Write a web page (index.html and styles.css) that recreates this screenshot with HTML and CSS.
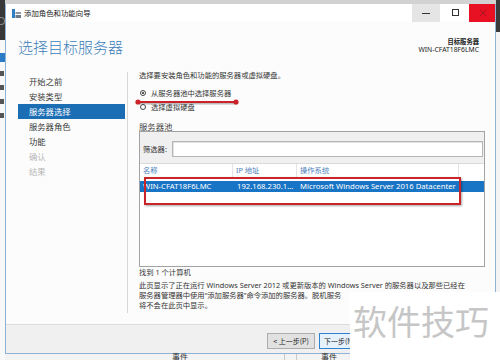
FILE: index.html
```html
<!DOCTYPE html>
<html lang="zh-CN">
<head>
<meta charset="utf-8">
<title>添加角色和功能向导</title>
<link rel="stylesheet" href="styles.css">
</head>
<body>
<div class="screen">
  <div class="side-left">
    <div class="side-dark"><span class="side-round"></span></div>
    <div class="side-icons">
      <span class="sicon sicon-blue"></span>
      <span class="sicon"></span>
      <span class="sicon"></span>
      <span class="sicon"></span>
      <span class="sicon"></span>
    </div>
  </div>

  <div class="middle">
    <div class="top-band"></div>
    <div class="window">
      <div class="titlebar">
        <svg class="app-icon" width="9" height="9" viewBox="0 0 9 9">
          <rect x="0" y="0" width="3" height="9" fill="#2f7fc7"/>
          <rect x="3.5" y="3" width="5.5" height="2" fill="#8c9aa8"/>
          <rect x="3.5" y="6" width="5.5" height="3" fill="#6d7b89"/>
        </svg>
        <span class="title">添加角色和功能向导</span>
        <div class="controls">
          <span class="ctl ctl-min"><svg width="28" height="18" viewBox="0 0 28 18"><line x1="10" y1="9.5" x2="18" y2="9.5" stroke="#333" stroke-width="1"/></svg></span>
          <span class="ctl ctl-max"><svg width="29" height="18" viewBox="0 0 29 18"><rect x="12.5" y="5.5" width="6" height="6" fill="none" stroke="#333" stroke-width="1"/></svg></span>
          <span class="ctl ctl-close"><svg width="26" height="18" viewBox="0 0 26 18"><path d="M11 6 L17 12 M17 6 L11 12" stroke="#a3141c" stroke-width="1"/></svg></span>
        </div>
      </div>

      <div class="header">
        <h1 class="heading">选择目标服务器</h1>
        <div class="target">
          <div class="target-label">目标服务器</div>
          <div class="target-name">WIN-CFAT18F6LMC</div>
        </div>
      </div>

      <div class="body">
        <nav class="nav">
          <div class="nav-item">开始之前</div>
          <div class="nav-item">安装类型</div>
          <div class="nav-item nav-active">服务器选择</div>
          <div class="nav-item">服务器角色</div>
          <div class="nav-item">功能</div>
          <div class="nav-item nav-disabled">确认</div>
          <div class="nav-item nav-disabled">结果</div>
        </nav>

        <div class="content">
          <p class="intro">选择要安装角色和功能的服务器或虚拟硬盘。</p>
          <div class="radio radio-first"><span class="radio-dot radio-checked"></span>从服务器池中选择服务器</div>
          <div class="radio"><span class="radio-dot"></span>选择虚拟硬盘</div>
          <div class="pool-label">服务器池</div>
          <div class="pool">
            <div class="filter">
              <span class="filter-label">筛选器:</span>
              <div class="filter-input"></div>
            </div>
            <div class="grid grid-head">
              <div class="cell">名称</div>
              <div class="cell">IP 地址</div>
              <div class="cell">操作系统</div>
              <div class="cell cell-last"></div>
            </div>
            <div class="grid grid-row">
              <div class="cell">WIN-CFAT18F6LMC</div>
              <div class="cell">192.168.230.1...</div>
              <div class="cell">Microsoft Windows Server 2016 Datacenter</div>
              <div class="cell cell-last"></div>
            </div>
          </div>
          <div class="found">找到 1 个计算机</div>
          <p class="note">此页显示了正在运行 Windows Server 2012 或更新版本的 Windows Server 的服务器以及那些已经在<br>服务器管理器中使用“添加服务器”命令添加的服务器。脱机服务<br>将不会在此页中显示。</p>
        </div>
      </div>

      <div class="footer">
        <button class="btn">&lt; 上一步(P)</button>
        <button class="btn btn-primary">下一步(N)</button>
      </div>
    </div>
    <div class="bottom-strip">
      <span class="bs-text bs-first">事件</span>
      <span class="bs-line bs-line-a"></span>
      <span class="bs-line bs-line-b"></span>
      <span class="bs-text bs-second">事件</span>
    </div>
  </div>

  <div class="side-right">
    <div class="side-right-dark"></div>
  </div>

  <svg class="mark-line" width="108" height="10" viewBox="0 0 108 10">
    <line x1="5" y1="5.5" x2="103" y2="5.5" stroke="rgba(0,0,0,0.25)" stroke-width="2"/>
    <line x1="4" y1="4" x2="102" y2="4" stroke="#cc2229" stroke-width="2"/>
    <circle cx="4" cy="4" r="2.6" fill="#cc2229"/>
    <circle cx="102" cy="4" r="2.6" fill="#cc2229"/>
  </svg>
  <div class="mark-rect"></div>
  <div class="watermark">软件技巧</div>
</div>
</body>
</html>
```

FILE: styles.css
```css
* { box-sizing: border-box; margin: 0; padding: 0; }

html, body {
  width: 500px;
  height: 360px;
  overflow: hidden;
}

body {
  font-family: "Noto Sans", "Noto Sans CJK SC", sans-serif;
  color: #333;
  background: #f2f2f2;
}

.screen {
  position: relative;
  width: 500px;
  height: 360px;
  display: flex;
}

/* background application strips */
.side-left {
  width: 5px;
  background: #f8f8f8;
  display: flex;
  flex-direction: column;
}
.side-dark {
  height: 40px;
  background: #383838;
  padding-top: 17px;
}
.side-round {
  display: block;
  width: 5px;
  height: 8px;
  border-radius: 0 4px 4px 0;
  border: 1px solid #8a8a8a;
  border-left: none;
}
.side-icons {
  display: flex;
  flex-direction: column;
  padding-top: 13px;
  gap: 9px;
}
.sicon {
  display: block;
  width: 4px;
  height: 5px;
  background: #555;
}
.sicon-blue {
  height: 9px;
  width: 5px;
  background: #2a7cc7;
}

.side-right {
  width: 4px;
  background: #f4f4f4;
}
.side-right-dark {
  height: 32px;
  background: #3a3a3a;
}

.middle {
  width: 491px;
  display: flex;
  flex-direction: column;
}
.top-band {
  height: 4px;
  background: #d2d2d2;
}

/* wizard window */
.window {
  height: 350px;
  background: #fcfcfc;
  border: 1px solid #8db2d6;
  border-top: none;
  display: flex;
  flex-direction: column;
}

.titlebar {
  height: 18px;
  background: #fff;
  display: flex;
  align-items: center;
  padding-left: 6px;
}
.app-icon {
  display: block;
  margin-right: 3px;
}
.title {
  font-size: 7.4px;
  line-height: 10px;
  color: #222;
}
.controls {
  margin-left: auto;
  display: flex;
  height: 18px;
}
.ctl {
  display: block;
  height: 18px;
}
.ctl svg { display: block; }
.ctl-min { width: 28px; background: #e5e5e5; }
.ctl-max { width: 29px; }
.ctl-close { width: 26px; background: #e81123; }

.header {
  height: 48px;
  display: flex;
  align-items: flex-start;
  justify-content: space-between;
  padding: 15px 16px 0 12px;
}
.heading {
  font-family: "Noto Sans CJK SC", sans-serif;
  font-size: 15px;
  line-height: 20px;
  font-weight: 300;
  color: #3d80b8;
}
.target {
  margin-top: 1px;
  text-align: right;
  color: #222;
}
.target-label {
  font-family: "Noto Sans CJK SC", sans-serif;
  font-size: 6.3px;
  font-weight: 700;
  line-height: 8px;
}
.target-name {
  font-size: 6.8px;
  line-height: 8px;
}

.body {
  height: 254px;
  display: flex;
}

.nav {
  width: 122px;
  margin: 2px 0 11px;
  padding: 2px 2px 0 12px;
  border-right: 1px solid #d7d7d7;
}
.nav-item {
  height: 15px;
  line-height: 15px;
  padding-left: 11px;
  font-family: "Noto Sans CJK SC", sans-serif;
  font-size: 8.3px;
  color: #3a3a3a;
}
.nav-active {
  background: #1b6db4;
  color: #fff;
}
.nav-disabled { color: #b7b7b7; }

.content {
  flex: 1;
  padding: 0 10px 0 11px;
  font-size: 7.3px;
}
.intro {
  line-height: 10px;
  font-family: "Noto Sans CJK SC", sans-serif;
}
.radio {
  height: 12px;
  margin-top: 2px;
  display: flex;
  align-items: center;
  font-family: "Noto Sans CJK SC", sans-serif;
  line-height: 12px;
}
.radio-first { margin-top: 7px; }
.radio-dot {
  width: 6px;
  height: 6px;
  margin: 0 5px 0 1px;
  border: 1px solid #444;
  border-radius: 50%;
  background: #fff;
  display: flex;
  align-items: center;
  justify-content: center;
}
.radio-checked::after {
  content: "";
  width: 2px;
  height: 2px;
  border-radius: 50%;
  background: #222;
}

.pool-label {
  margin-top: 9px;
  line-height: 9px;
  font-family: "Noto Sans CJK SC", sans-serif;
  font-size: 8.4px;
  color: #444;
}
.pool {
  height: 136px;
  border: 1px solid #a2a2a2;
  background: #fff;
}
.filter {
  height: 31px;
  background: #f0f0f0;
  display: flex;
  align-items: flex-start;
  padding: 9px 1px 0 3px;
}
.filter-label {
  line-height: 16px;
  font-family: "Noto Sans CJK SC", sans-serif;
}
.filter-input {
  margin-left: auto;
  width: 311px;
  height: 16px;
  background: #fff;
  border: 1px solid #b5b5b5;
  box-shadow: inset 1px 1px 0 #e2e2e2;
}

.grid {
  display: grid;
  grid-template-columns: 93px 64px 162px 1fr;
}
.grid-head {
  height: 14px;
  border-top: 1px solid #dadada;
  color: #4c80b8;
}
.grid-head .cell {
  line-height: 13px;
  border-right: 1px solid #e4e4e4;
}
.grid-head .cell-last { border-right: none; }
.cell {
  padding-left: 3px;
  white-space: nowrap;
  overflow: hidden;
}
.grid-row {
  margin-top: 4px;
  height: 11px;
  background: #1874c4;
  color: #fff;
  font-size: 7.7px;
}
.grid-row .cell { line-height: 11px; }
.grid-row .cell:nth-child(2) { padding-left: 4px; }
.grid-row .cell:nth-child(3) { padding-left: 3px; }

.found {
  line-height: 10px;
  font-family: "Noto Sans", "Noto Sans CJK SC", sans-serif;
}
.note {
  margin-top: 3px;
  line-height: 10px;
  white-space: nowrap;
  overflow: hidden;
}

.footer {
  height: 29px;
  background: #f0f0f0;
  border-top: 1px solid #dcdcdc;
  display: flex;
  align-items: flex-start;
  gap: 4px;
  padding: 8px 0 0 261px;
}
.btn {
  width: 48px;
  height: 16px;
  font-family: "Noto Sans CJK SC", sans-serif;
  font-size: 7px;
  line-height: 14px;
  color: #222;
  background: #e1e1e1;
  border: 1px solid #adadad;
}
.btn-primary {
  background: #e5f1fb;
  border-color: #2b82d0;
  text-align: left;
  padding-left: 4px;
}

.bottom-strip {
  height: 6px;
  display: flex;
  align-items: stretch;
  font-family: "Noto Sans CJK SC", sans-serif;
  font-size: 8px;
  line-height: 6px;
  color: #333;
  background: #f3f3f3;
}
.bs-text { display: block; }
.bs-first { margin-left: 167px; }
.bs-line {
  display: block;
  width: 1px;
  background: #c9c9c9;
}
.bs-line-a { margin-left: 96px; }
.bs-line-b { margin-left: 11px; }
.bs-second { margin-left: 24px; }

/* annotations drawn over the screenshot */
.mark-line {
  position: absolute;
  left: 134px;
  top: 98px;
}
.mark-rect {
  position: absolute;
  left: 144px;
  top: 177px;
  width: 317px;
  height: 28px;
  border: 2px solid #c9252b;
  box-shadow: 1px 1px 2px rgba(0, 0, 0, 0.35);
}
.watermark {
  position: absolute;
  left: 350px;
  top: 292px;
  width: 150px;
  height: 68px;
  background: #fff;
  padding: 12px 0 0 3px;
  font-family: "Noto Sans CJK SC", sans-serif;
  font-size: 34px;
  line-height: 34px;
  color: #c6c6c6;
  white-space: nowrap;
}
```
